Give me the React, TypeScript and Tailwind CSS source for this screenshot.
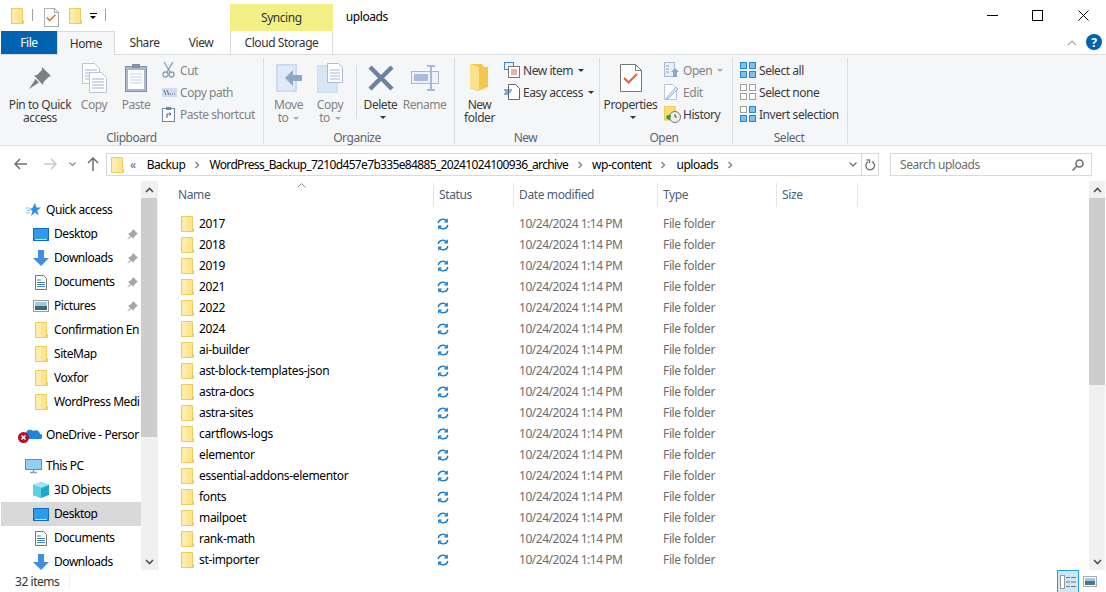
import type { ReactNode } from "react";

const files = [
  "2017", "2018", "2019", "2021", "2022", "2024", "ai-builder", "ast-block-templates-json", "astra-docs",
  "astra-sites", "cartflows-logs", "elementor", "essential-addons-elementor", "fonts", "mailpoet", "rank-math", "st-importer",
];

function Folder({ className = "" }: { className?: string }) {
  return (
    <svg width="13" height="16" viewBox="0 0 13 16" className={`shrink-0 ${className}`}>
      <path d="M.5.5h11v12h1v3H.5z" fill="#fde68f" stroke="#eccb5f" />
      <path d="M11.5 12.5v3" stroke="#eccb5f" />
      <path d="M1 1h5v14H1z" fill="#ffeca8" />
    </svg>
  );
}

function SyncIcon() {
  return (
    <svg width="12" height="12" viewBox="0 0 12 12" fill="none" stroke="#0b78d0" strokeWidth="1.3">
      <path d="M1.2 5.2A4.6 4.6 0 0 1 9.6 3.2" />
      <path d="M10.8 6.8A4.6 4.6 0 0 1 2.4 8.8" />
      <path d="M10.2.8v3H7.4" />
      <path d="M1.8 11.2v-3h2.8" />
    </svg>
  );
}

function Doc({ className = "", lines = true }: { className?: string; lines?: boolean }) {
  return (
    <svg width="18" height="21" viewBox="0 0 18 21" className={className}>
      <path d="M.5.5h12l5 5v15H.5z" fill="#fff" stroke="#b7c6dc" />
      {lines && <path d="M3 7h12M3 10h12M3 13h12M3 16h12" stroke="#9fb3d1" />}
    </svg>
  );
}

function Check({ size = 1 }: { size?: number }) {
  return (
    <svg width={33 * size} height={42 * size} viewBox="0 0 22 28">
      <path d="M.5.5h15l6 6v21H.5z" fill="#fff" stroke="#777" />
      <path d="M15.5.5v6h6" fill="none" stroke="#777" />
      <path d="M4 14l4.5 4.5L17 10" fill="none" stroke="#e8602a" strokeWidth="2" />
    </svg>
  );
}

function Caret({ color = "#333" }: { color?: string }) {
  return <span className="ml-[5px] inline-block h-0 w-0 border-x-[3px] border-t-[3px] border-x-transparent align-middle" style={{ borderTopColor: color }} />;
}

function Big({ w, icon, label, sub, dim, caret }: { w: string; icon: ReactNode; label: string; sub?: string; dim?: boolean; caret?: boolean }) {
  return (
    <div className={`flex flex-col items-center ${w} ${dim ? "text-[#838383]" : "text-[#3c3c3c]"}`}>
      <div className="flex h-[40px] items-center justify-center">{icon}</div>
      <div className="whitespace-nowrap">{label}</div>
      {sub && <div className="whitespace-nowrap">{sub}{caret && <Caret color="#aaa" />}</div>}
      {!sub && caret && <div className="flex h-[13px] items-center"><Caret /></div>}
    </div>
  );
}

function Small({ icon, label, dim, caret, gap = "w-[18px]" }: { icon: ReactNode; label: string; dim?: boolean; caret?: string; gap?: string }) {
  return (
    <div className={`flex h-[22px] items-center whitespace-nowrap ${dim ? "text-[#838383]" : "text-[#3c3c3c]"}`}>
      <div className={`flex ${gap} shrink-0 items-center`}>{icon}</div>
      {label}
      {caret && <Caret color={caret} />}
    </div>
  );
}

function Group({ w, label, labelPad = "", children }: { w: string; label: string; labelPad?: string; children: ReactNode }) {
  return (
    <div className={`flex h-[86px] shrink-0 flex-col border-r border-[#dadbdc] ${w}`}>
      <div className="flex h-[73px]">{children}</div>
      <div className={`text-center leading-[13px] text-[#5c6670] ${labelPad}`}>{label}</div>
    </div>
  );
}

function Crumb() {
  return (
    <svg width="8" height="8" viewBox="0 0 7 8" className="mx-[8px]" fill="none" stroke="#8a8a8a" strokeWidth="1.5">
      <path d="M2 1l3 3-3 3" />
    </svg>
  );
}

function Pin() {
  return (
    <svg width="11" height="11" viewBox="0 0 11 11">
      <path d="M6 0l5 5-1.5.6L7 8l-.5 2L1 4.5l2-.5L5.4 1.500z M3 7l-3 4 4-3z" fill="#a5a5a5" />
    </svg>
  );
}

function SelGrid({ on }: { on: number[] }) {
  const cells = [[0, 0], [9, 0], [0, 9], [9, 9]];
  return (
    <svg width="16" height="16" viewBox="0 0 16 16">
      {cells.map(([x, y], i) => (
        <rect key={i} x={x + 0.5} y={y + 0.5} width="6" height="6" fill={on.includes(i) ? "#7cc0ef" : "#fff"} stroke={on.includes(i) ? "#1f8bd8" : "#a0a0a0"} />
      ))}
    </svg>
  );
}

function Screen() {
  return (
    <svg width="16" height="13" viewBox="0 0 16 13">
      <rect width="16" height="13" fill="#0e6cc4" />
      <rect x="1" y="1" width="14" height="10" fill="#2e9bec" />
      <rect x="2" y="11" width="12" height="1" fill="#cfe6f8" />
    </svg>
  );
}

function Arrow() {
  return (
    <svg width="16" height="16" viewBox="0 0 16 16">
      <path d="M5 0h6v8h5l-8 8-8-8h5z" fill="#3f8ee0" />
    </svg>
  );
}

function SmallDoc() {
  return (
    <svg width="12" height="15" viewBox="0 0 12 15" className="ml-[2px]">
      <path d="M.5.5h8l3 3v11H.5z" fill="#fff" stroke="#777" />
      <path d="M2 5h4M2 7.500h8M2 9.500h8M2 11.500h8" stroke="#4a7fc0" />
    </svg>
  );
}

function Picture() {
  return (
    <svg width="16" height="12" viewBox="0 0 16 12">
      <rect x=".5" y=".5" width="15" height="11" fill="#fff" stroke="#999" />
      <rect x="2" y="2" width="12" height="4" fill="#9cc7e8" />
      <rect x="2" y="6" width="12" height="4" fill="#3f6a70" />
    </svg>
  );
}

function NavRow({ icon, label, pin, active, indent = true, className = "" }: { icon: ReactNode; label: string; pin?: boolean; active?: boolean; indent?: boolean; className?: string }) {
  return (
    <div className={`flex h-6 items-center whitespace-nowrap ${active ? "bg-[#d9d9d9]" : ""} ${className}`}>
      <div className={`flex shrink-0 items-center ${indent ? "ml-[32px] w-[21px]" : "ml-[25px] w-[20px]"}`}>{icon}</div>
      <div className={`mb-[2px] overflow-hidden ${pin ? "w-[73px]" : "flex-1"}`}>{label}</div>
      {pin && <Pin />}
    </div>
  );
}

function ScrollArrow({ down }: { down?: boolean }) {
  return (
    <div className="flex h-[17px] items-center justify-center">
      <svg width="9" height="6" viewBox="0 0 9 6" fill="none" stroke="#505050" strokeWidth="1.600">
        <path d={down ? "M1 1l3.500 3.500L8 1" : "M1 5l3.500-3.500L8 5"} />
      </svg>
    </div>
  );
}

export default function App() {
  return (
    <div className="h-[592px] w-[1106px] overflow-hidden bg-white font-['Noto_Sans','Open_Sans',sans-serif] text-[12px] leading-[13px] tracking-[-0.45px] text-black">
      {/* title bar */}
      <div className="flex h-[31px] items-start">
        <Folder className="ml-[11px] mt-[8px]" />
        <div className="ml-[8px] mt-[9px] h-[12px] w-px bg-[#a0a0a0]" />
        <div className="ml-[11px] mt-[8px]"><Check size={0.45} /></div>
        <Folder className="ml-[10px] mt-[8px]" />
        <div className="ml-[8px] mt-[13px] flex w-[7px] flex-col items-center gap-[2px]">
          <div className="h-px w-[7px] bg-black" />
          <div className="h-0 w-0 border-x-[3px] border-t-[3px] border-x-transparent border-t-black" />
        </div>
        <div className="ml-[8px] mt-[9px] h-[12px] w-px bg-[#a0a0a0]" />
        <div className="ml-[124px] mt-[4px] flex h-[27px] w-[103px] items-center justify-center bg-[#f2f084] text-[#333]">Syncing</div>
        <div className="ml-[13px] mt-[10px]">uploads</div>
        <svg width="11" height="11" viewBox="0 0 11 11" className="ml-[599px] mt-[15px]"><path d="M0 .5h11" stroke="#000" /></svg>
        <svg width="11" height="11" viewBox="0 0 11 11" className="ml-[34px] mt-[10px]"><rect x=".5" y=".5" width="10" height="10" fill="none" stroke="#000" /></svg>
        <svg width="11" height="11" viewBox="0 0 11 11" className="ml-[35px] mt-[10px]"><path d="M.5.5l10 10M10.500.5l-10 10" stroke="#000" /></svg>
      </div>

      {/* tabs */}
      <div className="flex h-[23px]">
        <div className="ml-px flex w-[56px] items-center justify-center bg-[#0063b1] text-white">File</div>
        <div className="z-10 flex h-[24px] w-[58px] items-center justify-center border-x border-t border-[#dadbdc] bg-[#f5f6f7] text-[#333]">Home</div>
        <div className="flex w-[59px] items-center justify-center text-[#333]">Share</div>
        <div className="flex w-[54px] items-center justify-center text-[#333]">View</div>
        <div className="ml-[2px] flex w-[103px] items-center justify-center border-x border-[#dadbdc] text-[#333]">Cloud Storage</div>
        <svg width="10" height="6" viewBox="0 0 10 6" className="ml-[734px] mt-[9px]" fill="none" stroke="#a8a8a8" strokeWidth="1.200"><path d="M1 5l4-4 4 4" /></svg>
        <div className="ml-[9px] mt-[3px] flex h-4 w-4 items-center justify-center rounded-full bg-[#0063b1] text-[12px] font-bold text-white">?</div>
      </div>

      {/* ribbon */}
      <div className="flex h-[92px] border-y border-[#dadbdc] bg-[#f5f6f7] pt-[3px]">
        <Group w="w-[264px]" label="Clipboard">
          <div className="flex w-[162px] pl-[5px]">
            <Big w="w-[70px]" label="Pin to Quick" sub="access" icon={
              <svg width="22" height="22" viewBox="0 0 22 22"><path d="M13 0l9 9-2.500 1-5 5-.5 3L5 8.500l3-.5 5-5zM6.500 12L0 22l10-6.500z" fill="#7b7f85" /></svg>
            } />
            <Big w="w-[38px]" label="Copy" dim icon={
              <div className="relative h-[30px] w-[25px]"><Doc className="absolute left-0 top-0" /><Doc className="absolute left-[7px] top-[9px]" /></div>
            } />
            <Big w="w-[46px]" label="Paste" dim icon={
              <svg width="22" height="28" viewBox="0 0 22 28"><rect x=".5" y="2.500" width="21" height="25" fill="#a9b8cd" stroke="#7f90a8" /><rect x="3" y="6" width="16" height="19" fill="#fff" /><path d="M5 10h12M5 13h12M5 16h12M5 19h12" stroke="#c4d0e2" /><rect x="7" y="0" width="8" height="4" fill="#7f90a8" /></svg>
            } />
          </div>
          <div className="pt-px">
            <Small dim label="Cut" icon={
              <svg width="13" height="16" viewBox="0 0 13 16" fill="none" stroke="#8a9cb5" strokeWidth="1.300"><path d="M2 0l6 10M11 0L5 10" /><circle cx="3.500" cy="12.500" r="2.500" /><circle cx="9.500" cy="12.500" r="2.500" /></svg>
            } />
            <Small dim label="Copy path" icon={
              <svg width="15" height="9" viewBox="0 0 15 9"><rect width="15" height="9" fill="#cfdcef" /><path d="M2 2l2 5M5 2l2 5M8 6h1M10 6h1M12 6h1" stroke="#5e728e" /></svg>
            } />
            <Small dim label="Paste shortcut" icon={
              <svg width="13" height="15" viewBox="0 0 13 15"><rect x=".5" y="1.500" width="12" height="13" fill="#fff" stroke="#6d87a8" strokeWidth="1" /><rect x="4" y="0" width="5" height="3" fill="#6d87a8" /><path d="M5 11V7h4L7.500 5.500M9 7L7.500 8.500" stroke="#3f628c" fill="none" /></svg>
            } />
          </div>
        </Group>

        <Group w="w-[191px]" label="Organize" labelPad="pr-[4px]">
          <div className="flex pl-[4px]">
            <Big w="w-[41px]" label="Move" sub="to" dim caret icon={
              <svg width="26" height="28" viewBox="0 0 26 28"><rect x="0" y="0" width="21" height="28" fill="#d3e0f2" /><path d="M1 1h19v26H1z" fill="#dfe9f7" stroke="#c3d3ea" /><path d="M26 11v6H17v5L9 14l8-8v5z" fill="#8ea6c8" /></svg>
            } />
            <Big w="w-[42px]" label="Copy" sub="to" dim caret icon={
              <svg width="26" height="30" viewBox="0 0 26 30"><path d="M0 3h20v27H0z" fill="#d9e4f4" stroke="#c3d3ea" /><path d="M10.500.5h11l4 4v15h-15z" fill="#fff" stroke="#a9bbd6" /><path d="M13 7h10M13 10h10M13 13h10M13 16h10" stroke="#a9bbd6" /></svg>
            } />
            <div className="ml-[5px] mt-[7px] h-[54px] w-px bg-[#dadbdc]" />
            <Big w="w-[47px]" label="Delete" caret icon={
              <svg width="26" height="26" viewBox="0 0 26 26"><path d="M2 2l22 22M24 2L2 24" stroke="#6d81a3" strokeWidth="4.500" /></svg>
            } />
            <Big w="w-[41px]" label="Rename" dim icon={
              <svg width="28" height="26" viewBox="0 0 28 26"><rect x=".5" y="6.500" width="27" height="12" fill="#eef2f8" stroke="#a7b8d0" /><rect x="3" y="9" width="14" height="7" fill="#a8bbd8" /><path d="M16 1h8M20 1v24M16 25h8" stroke="#a7b8d0" strokeWidth="2" /></svg>
            } />
          </div>
        </Group>

        <Group w="w-[145px]" label="New" labelPad="pr-[3px]">
          <div className="flex pl-[4px]">
            <Big w="w-[41px]" label="New" sub="folder" icon={
              <svg width="20" height="28" viewBox="0 0 20 28"><path d="M0 0h12l2 3h4v20L8 27H7L0 24z" fill="#f3c64f" /><path d="M0 0l9 3v24L0 24z" fill="#fbe28c" /></svg>
            } />
            <div className="ml-[4px] pt-px">
              <Small gap="w-[19px]" label="New item" caret="#333" icon={
                <svg width="16" height="16" viewBox="0 0 16 16"><rect x=".5" y=".5" width="9" height="7" fill="#e6f1fb" stroke="#3a87c8" /><rect x="4.500" y="4.500" width="11" height="11" fill="#fff" stroke="#777" /><path d="M7 8h6M7 10h6M7 12h6" stroke="#c96c4c" /></svg>
              } />
              <Small gap="w-[19px]" label="Easy access" caret="#333" icon={
                <svg width="16" height="16" viewBox="0 0 16 16"><path d="M4.500.5h7l4 4v11h-11z" fill="#fff" stroke="#666" /><path d="M0 6h8M1 8h6M0 10h5" stroke="#1f5fa8" /></svg>
              } />
            </div>
          </div>
        </Group>

        <Group w="w-[133px]" label="Open" labelPad="pr-[4px]">
          <div className="flex pl-[2px]">
            <Big w="w-[57px]" label="Properties" caret icon={<Check size={0.667} />} />
            <div className="ml-[5px] pt-px">
              <Small dim label="Open" gap="w-[19px]" caret="#aaa" icon={
                <svg width="16" height="16" viewBox="0 0 16 16"><rect x=".5" y=".5" width="10" height="14" fill="#e9eff8" stroke="#a9bbd6" /><path d="M2 4h3M2 7h3M2 10h3" stroke="#8ea6c8" /><path d="M11 6l4 4h-2v5h-4v-5H7z" fill="#8ea6c8" /></svg>
              } />
              <Small dim label="Edit" gap="w-[19px]" icon={
                <svg width="15" height="16" viewBox="0 0 15 16"><path d="M.5.5h8l4 4v11H.5z" fill="#fff" stroke="#b7c6dc" /><path d="M3 13l9-10 2 2-9 9-3 1z" fill="#cfe0f5" stroke="#a9bbd6" /></svg>
              } />
              <Small label="History" gap="w-[19px]" icon={
                <svg width="17" height="17" viewBox="0 0 17 17"><rect x="0" y="0" width="11" height="14" fill="#fbdc77" stroke="#e3bc46" /><circle cx="11" cy="11" r="5.500" fill="#eee" stroke="#777" /><path d="M11 8v3h2" stroke="#555" fill="none" /><path d="M2 11a4 4 0 0 1 5-2l-1 5-3-1z" fill="#3a9c3a" /></svg>
              } />
            </div>
          </div>
        </Group>

        <Group w="w-[115px]" label="Select" labelPad="pr-[2px]">
          <div className="pl-[7px] pt-px">
            <Small gap="w-[19px]" label="Select all" icon={<SelGrid on={[0, 1, 2, 3]} />} />
            <Small gap="w-[19px]" label="Select none" icon={<SelGrid on={[]} />} />
            <Small gap="w-[19px]" label="Invert selection" icon={<SelGrid on={[1, 2, 3]} />} />
          </div>
        </Group>
      </div>

      {/* address bar */}
      <div className="flex h-[35px] items-start pt-[7px]">
        <svg width="14" height="12" viewBox="0 0 14 12" className="ml-[14px] mt-[5px]" fill="none" stroke="#6e6e6e" strokeWidth="1.500"><path d="M13 6H1M6 1L1 6l5 5" /></svg>
        <svg width="14" height="12" viewBox="0 0 14 12" className="ml-[15px] mt-[5px]" fill="none" stroke="#c8c8c8" strokeWidth="1.500"><path d="M1 6h12M8 1l5 5-5 5" /></svg>
        <svg width="7" height="5" viewBox="0 0 7 5" className="ml-[12px] mt-[9px]" fill="none" stroke="#8a8a8a" strokeWidth="1.200"><path d="M.5.5l3 3 3-3" /></svg>
        <svg width="12" height="14" viewBox="0 0 12 14" className="ml-[11px] mt-[4px]" fill="none" stroke="#6e6e6e" strokeWidth="1.500"><path d="M6 14V1M1 6l5-5 5 5" /></svg>
        <div className="ml-[7px] flex h-[23px] w-[773px] items-center border border-[#d9d9d9]">
          <Folder className="ml-[4px]" />
          <span className="ml-[6px] text-[#666]">«</span>
          <span className="ml-[11px]">Backup</span>
          <Crumb />
          <span className="tracking-[-0.66px]">WordPress_Backup_7210d457e7b335e84885_20241024100936_archive</span>
          <Crumb />
          <span>wp-content</span>
          <Crumb />
          <span className="ml-px">uploads</span>
          <Crumb />
          <svg width="8" height="5" viewBox="0 0 8 5" className="ml-auto mr-[4px]" fill="none" stroke="#666" strokeWidth="1.200"><path d="M.5.5L4 4 7.500.5" /></svg>
          <div className="flex h-full w-[17px] items-center justify-center border-l border-[#d9d9d9]">
            <svg width="11" height="12" viewBox="0 0 11 12" fill="none" stroke="#7d7d7d" strokeWidth="1.500"><path d="M3 2.800a4.300 4.300 0 1 0 4-.2" /><path d="M1.500 1h3v3" /></svg>
          </div>
        </div>
        <div className="ml-[11px] flex h-[23px] w-[202px] items-center justify-between border border-[#d9d9d9] pl-[9px] pr-[7px] text-[#6d6d6d]">
          Search uploads
          <svg width="12" height="12" viewBox="0 0 12 12" fill="none" stroke="#6a6a6a" strokeWidth="1.500"><circle cx="7.500" cy="4.500" r="3.500" /><path d="M5 7l-4.500 4.500" /></svg>
        </div>
      </div>

      {/* main */}
      <div className="flex h-[391px]">
        <div className="flex w-[158px] shrink-0 border-r border-[#f0f0f0]">
          <div className="w-[141px] overflow-hidden pl-px pt-[17px]">
            <NavRow indent={false} label="Quick access" icon={
              <svg width="15" height="14" viewBox="0 0 15 14"><path d="M9 0l1.500 4.500H15l-3.700 3 1.400 5-3.700-3L5 13l1.400-5L3 5.500h3z" fill="#2b90e6" /><path d="M0 5h3M1 7.500h3M0 10h4" stroke="#7fbdf0" /></svg>
            } />
            <NavRow pin label="Desktop" icon={<Screen />} />
            <NavRow pin label="Downloads" icon={<Arrow />} />
            <NavRow pin label="Documents" icon={<SmallDoc />} />
            <NavRow pin label="Pictures" icon={<Picture />} />
            <NavRow label="Confirmation En" icon={<Folder className="ml-[2px]" />} />
            <NavRow label="SiteMap" icon={<Folder className="ml-[2px]" />} />
            <NavRow label="Voxfor" icon={<Folder className="ml-[2px]" />} />
            <NavRow label="WordPress Medi" icon={<Folder className="ml-[2px]" />} />
            <NavRow indent={false} className="mt-[9px]" label="OneDrive - Persor" icon={
              <svg width="24" height="16" viewBox="0 0 24 16" className="-ml-[8px] shrink-0"><path d="M9 10a4 4 0 0 1 6-6 4.500 4.500 0 0 1 7 3 2.500 2.500 0 0 1 0 5H9z" fill="#1d86dc" /><circle cx="5.500" cy="10.500" r="5.500" fill="#b81028" /><path d="M3.500 8.500l4 4M7.500 8.500l-4 4" stroke="#fff" strokeWidth="1.300" /></svg>
            } />
            <NavRow indent={false} className="mt-[7px]" label="This PC" icon={
              <svg width="17" height="15" viewBox="0 0 17 15" className="-ml-px"><rect x=".5" y=".5" width="16" height="10" fill="#8fd0f5" stroke="#6a8fae" /><path d="M5 13.500h7M8.500 11v2" stroke="#8aa0b4" strokeWidth="1.500" /></svg>
            } />
            <NavRow label="3D Objects" icon={
              <svg width="16" height="16" viewBox="0 0 16 16"><path d="M8 0l8 3v10l-8 3-8-3V3z" fill="#20a8c8" /><path d="M0 3l8 3 8-3-8-3z" fill="#a0e6f2" /><path d="M0 3l8 3v10l-8-3z" fill="#5fd0e2" /></svg>
            } />
            <NavRow active label="Desktop" icon={<Screen />} />
            <NavRow label="Documents" icon={<SmallDoc />} />
            <NavRow label="Downloads" icon={<Arrow />} />
          </div>
          <div className="flex h-[389px] w-[16px] flex-col bg-[#f0f0f0]">
            <ScrollArrow />
            <div className="h-[239px] bg-[#cdcdcd]" />
            <div className="flex-1" />
            <ScrollArrow down />
          </div>
        </div>

        <div className="relative flex-1">
          <svg width="9" height="5" viewBox="0 0 9 5" className="absolute left-[139px] top-[2px]" fill="none" stroke="#8a8a8a"><path d="M.5 4.500l4-4 4 4" /></svg>
          <div className="flex h-[26px] pt-[2px] tracking-[-0.38px] text-[#4c607a]">
            <div className="flex h-6 w-[276px] items-center border-r border-[#e5e5e5] pb-[2px] pl-[20px]">Name</div>
            <div className="flex h-6 w-[80px] items-center border-r border-[#e5e5e5] pb-[2px] pl-[5px]">Status</div>
            <div className="flex h-6 w-[144px] items-center border-r border-[#e5e5e5] pb-[2px] pl-[5px]">Date modified</div>
            <div className="flex h-6 w-[119px] items-center border-r border-[#e5e5e5] pb-[2px] pl-[5px]">Type</div>
            <div className="flex h-6 w-[81px] items-center border-r border-[#e5e5e5] pb-[2px] pl-[5px]">Size</div>
          </div>
          <div className="h-[365px] overflow-hidden pt-[6px]">
            {files.map((name) => (
              <div key={name} className="flex h-[21px] items-center">
                <div className="flex w-[276px] items-center pl-[23px]">
                  <Folder />
                  <span className="ml-[5px] tracking-[-0.33px]">{name}</span>
                </div>
                <div className="w-[85px] pl-[3px]"><SyncIcon /></div>
                <div className="w-[144px] tracking-[-0.48px] text-[#6d6d6d]">10/24/2024 1:14 PM</div>
                <div className="tracking-[-0.35px] text-[#6d6d6d]">File folder</div>
              </div>
            ))}
          </div>
        </div>

        <div className="flex h-[389px] w-[16px] shrink-0 flex-col bg-[#f0f0f0]">
          <ScrollArrow />
          <div className="h-[187px] bg-[#cdcdcd]" />
          <div className="flex-1" />
          <ScrollArrow down />
        </div>
        <div className="w-px" />
      </div>

      {/* status bar */}
      <div className="-mt-[2px] flex h-[22px] items-center">
        <div className="ml-[15px] w-[54px] text-[#333]">32 items</div>
        <div className="h-[16px] w-px bg-[#f0f0f0]" />
        <div className="ml-[987px] flex h-[22px] w-[22px] shrink-0 flex-col items-center justify-center gap-[1px] border-x border-t border-[#26a0da] bg-[#cce8f6]">
          <svg width="17" height="14" viewBox="0 0 17 14"><rect x=".5" y=".5" width="4" height="13" fill="#fff" stroke="#999" /><path d="M6 2.500h4M11 2.500h5M6 7h4M11 7h5M6 11.500h4M11 11.500h5" stroke="#777" /></svg>
        </div>
        <div className="ml-[4px] shrink-0"><svg width="14" height="11" viewBox="0 0 14 11"><rect x=".5" y=".5" width="13" height="10" fill="#fff" stroke="#aaa" /><rect x="2" y="2" width="10" height="3" fill="#9cc7e8" /><rect x="2" y="5" width="10" height="4" fill="#4b7a80" /></svg></div>
      </div>
    </div>
  );
}
